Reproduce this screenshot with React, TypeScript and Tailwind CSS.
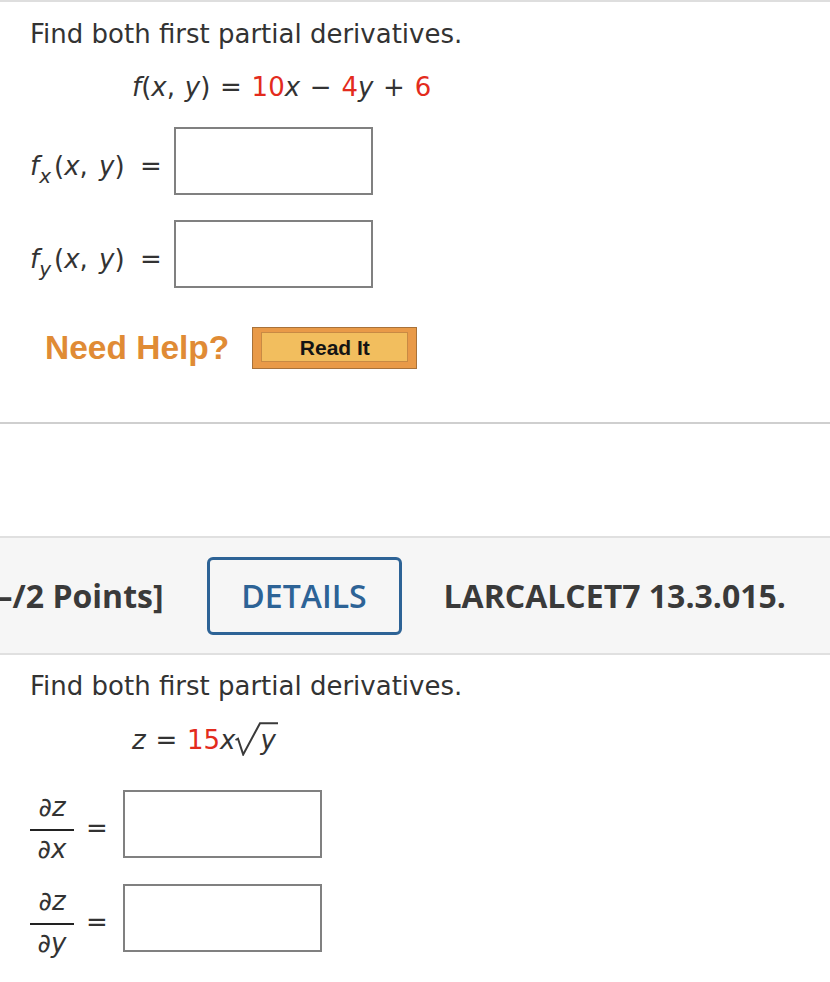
import React from 'react';

const verdana = { fontFamily: '"DejaVu Sans", Verdana, sans-serif' };
const openSans = { fontFamily: '"Open Sans", "Liberation Sans", sans-serif' };
const arial = { fontFamily: '"Liberation Sans", Arial, sans-serif' };

function AnswerBox() {
  return <div className="w-[199px] h-[68px] border-2 border-[#808080] bg-white" />;
}

function PartialLabel({ sub }: { sub: string }) {
  return (
    <span className="w-[110px] mt-[10px] text-[26px] leading-[26px] text-[#333] whitespace-nowrap [word-spacing:3px]">
      <i>f</i>
      <i className="relative top-[8px] text-[20px] leading-none mr-[3px]">{sub}</i>
      (<i>x</i>, <i>y</i>)
    </span>
  );
}

function Fraction({ den }: { den: string }) {
  return (
    <div className="w-[44px] mt-[8px] flex flex-col items-center text-[26px] leading-[26px] text-[#333]">
      <span className="mb-[9px]">
        ∂<i>z</i>
      </span>
      <div className="w-full h-[2px] bg-[#222]" />
      <span className="mt-[5px]">
        ∂<i>{den}</i>
      </span>
    </div>
  );
}

// square-root sign with its overbar; negative margins keep the line box at 26px
function Radical() {
  return (
    <svg width="43" height="34" viewBox="0 0 43 34" className="inline-block -mt-[5px] -mb-[4px] align-[-3px]">
      <path d="M0.5 18 L3 16.6 L8.2 32.5 L25 1.2 H43" fill="none" stroke="#3a3a3a" strokeWidth="2" />
    </svg>
  );
}

export default function App() {
  return (
    <div className="w-[830px] h-[982px] bg-white overflow-hidden text-[#333]" style={verdana}>
      <div className="h-[2px] bg-[#dedede]" />

      {/* question one */}
      <div className="pl-[30px]">
        <p className="mt-[19px] text-[26px] leading-[26px]">Find both first partial derivatives.</p>
        <p className="mt-[27px] pl-[102px] text-[26px] leading-[26px] whitespace-nowrap [word-spacing:1.5px]">
          <i>f</i>(<i>x</i>, <i>y</i>) = <span className="text-[#e32b1d]">10</span>
          <i>x</i> − <span className="text-[#e32b1d]">4</span>
          <i>y</i> + <span className="text-[#e32b1d]">6</span>
        </p>

        <div className="mt-[27px] flex items-center h-[68px]">
          <PartialLabel sub="x" />
          <span className="w-[22px] mt-[10px] text-[26px] leading-[26px]">=</span>
          <div className="ml-[12px]">
            <AnswerBox />
          </div>
        </div>
        <div className="mt-[25px] flex items-center h-[68px]">
          <PartialLabel sub="y" />
          <span className="w-[22px] mt-[10px] text-[26px] leading-[26px]">=</span>
          <div className="ml-[12px]">
            <AnswerBox />
          </div>
        </div>

        <div className="mt-[39px] pl-[15px] flex items-center h-[42px]">
          <span className="text-[33.5px] font-bold text-[#e08b35] leading-none" style={arial}>
            Need Help?
          </span>
          <button
            className="ml-[23px] w-[165px] h-[42px] border border-[#a8723a] bg-[#e99a48] pt-[4px] pr-[8px] pb-[6px] pl-[8px]"
            style={arial}
          >
            <div className="w-full h-full border border-[#c88a44] bg-[#f2be5e] flex items-center justify-center text-[21px] font-bold text-[#141414] leading-none">
              Read It
            </div>
          </button>
        </div>
      </div>

      <div className="mt-[53px] h-[2px] bg-[#cfcfcf]" />

      {/* header of question two */}
      <div
        className="mt-[112px] h-[119px] border-y-2 border-[#e0e0e0] bg-[#f6f6f6] flex items-center whitespace-nowrap text-[32px]"
        style={openSans}
      >
        <span className="ml-[-14px] font-bold text-[#3a3a3a]">[–/2 Points]</span>
        <div className="ml-[43px] w-[195px] h-[78px] border-[3px] border-[#2d6396] rounded-[6px] flex items-center justify-center font-semibold text-[#2d6396]">
          DETAILS
        </div>
        <span className="ml-[42px] font-bold text-[#3a3a3a]">LARCALCET7 13.3.015.</span>
      </div>

      {/* question two */}
      <div className="pl-[30px]">
        <p className="mt-[18px] text-[26px] leading-[26px]">Find both first partial derivatives.</p>
        <p className="mt-[28px] pl-[102px] text-[26px] leading-[26px] whitespace-nowrap [word-spacing:1.5px]">
          <i>z</i> = <span className="text-[#e32b1d]">15</span>
          <i>x</i>
          <Radical />
          <i className="ml-[-18px]">y</i>
        </p>

        <div className="mt-[37px] flex items-center h-[68px]">
          <Fraction den="x" />
          <span className="ml-[12px] w-[22px] mt-[8px] text-[26px] leading-[26px]">=</span>
          <div className="ml-[15px]">
            <AnswerBox />
          </div>
        </div>
        <div className="mt-[26px] flex items-center h-[68px]">
          <Fraction den="y" />
          <span className="ml-[12px] w-[22px] mt-[8px] text-[26px] leading-[26px]">=</span>
          <div className="ml-[15px]">
            <AnswerBox />
          </div>
        </div>
      </div>
    </div>
  );
}
